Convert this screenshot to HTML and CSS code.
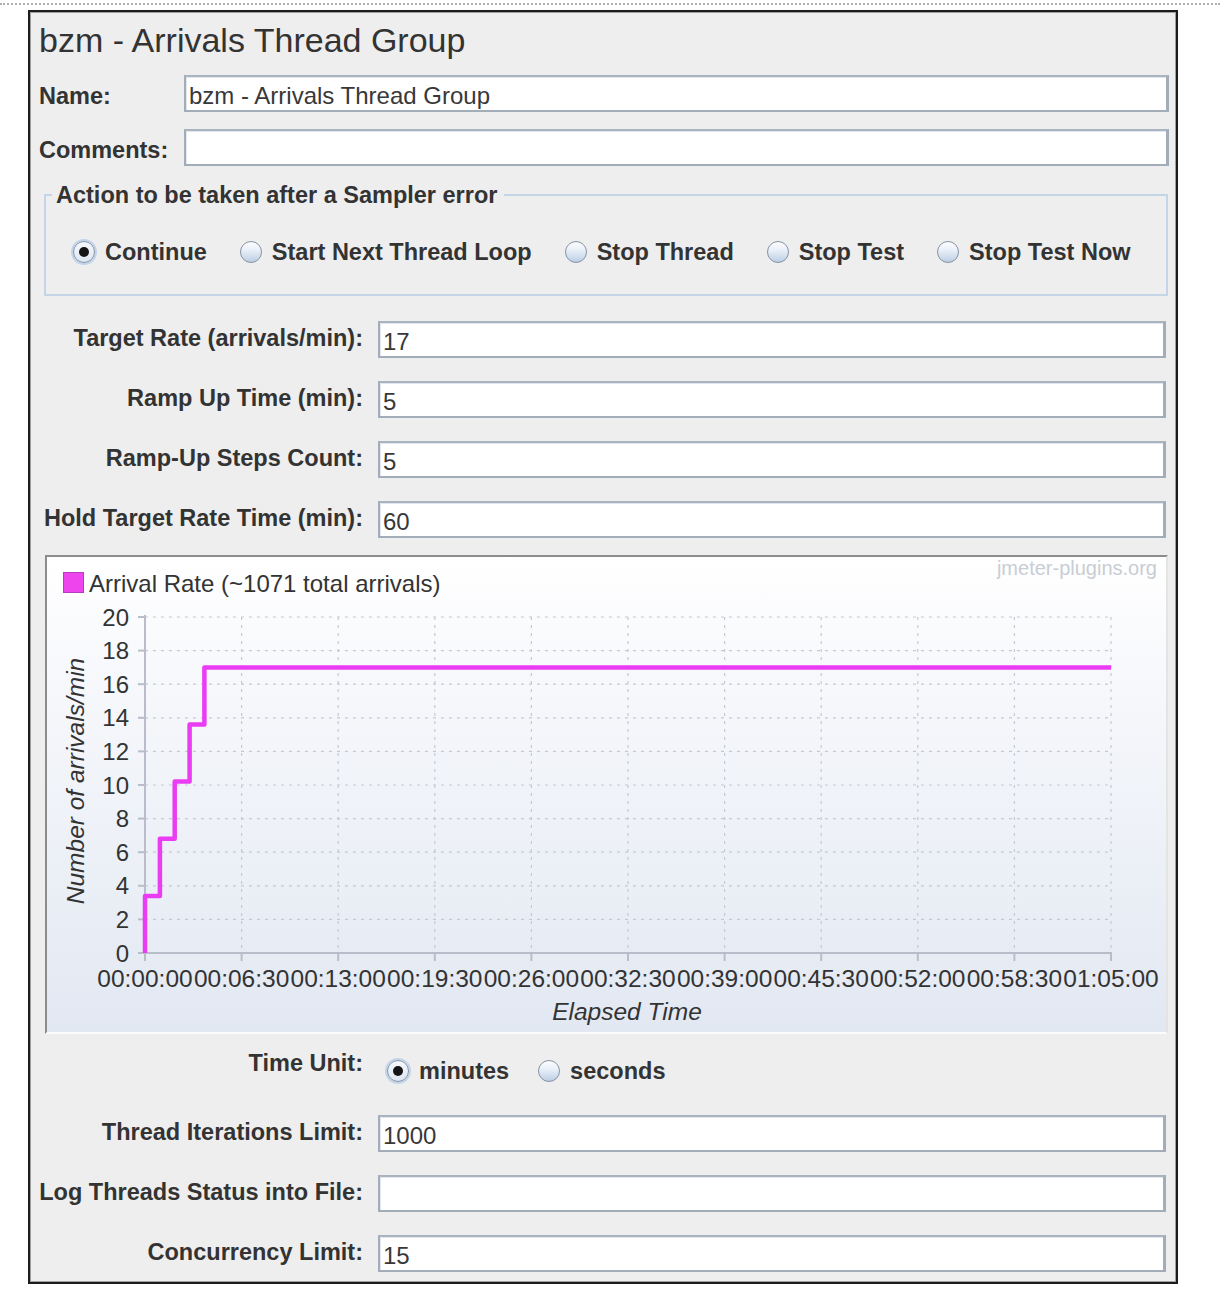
FILE: index.html
```html
<!DOCTYPE html>
<html>
<head>
<meta charset="utf-8">
<title>bzm - Arrivals Thread Group</title>
<link rel="stylesheet" href="styles.css">
</head>
<body>
<div class="dots"></div>
<div class="panel">
  <div class="title">bzm - Arrivals Thread Group</div>
  <div class="top-row"><label>Name:</label><input class="field" value="bzm - Arrivals Thread Group"></div>
  <div class="top-row"><label>Comments:</label><input class="field" value=""></div>

  <div class="group">
    <div class="group-title">Action to be taken after a Sampler error</div>
    <div class="radios">
      <span class="opt"><span class="radio on"></span>Continue</span>
      <span class="opt"><span class="radio"></span>Start Next Thread Loop</span>
      <span class="opt"><span class="radio"></span>Stop Thread</span>
      <span class="opt"><span class="radio"></span>Stop Test</span>
      <span class="opt"><span class="radio"></span>Stop Test Now</span>
    </div>
  </div>

  <div class="form">
    <div class="frow"><label>Target Rate (arrivals/min):</label><input class="field" value="17"></div>
    <div class="frow"><label>Ramp Up Time (min):</label><input class="field" value="5"></div>
    <div class="frow"><label>Ramp-Up Steps Count:</label><input class="field" value="5"></div>
    <div class="frow"><label>Hold Target Rate Time (min):</label><input class="field" value="60"></div>
  </div>

  <div class="chart">
    <svg viewBox="0 0 1119 475" xmlns="http://www.w3.org/2000/svg">
      <text class="watermark" x="1110" y="18" text-anchor="end">jmeter-plugins.org</text>
      <rect class="legend-box" x="16.5" y="15.5" width="20" height="20"/>
      <text class="legend-text" x="42" y="35">Arrival Rate (~1071 total arrivals)</text>

      <g class="grid">
        <line x1="98" y1="60" x2="1064" y2="60"/>
        <line x1="98" y1="93.6" x2="1064" y2="93.6"/>
        <line x1="98" y1="127.2" x2="1064" y2="127.2"/>
        <line x1="98" y1="160.8" x2="1064" y2="160.8"/>
        <line x1="98" y1="194.4" x2="1064" y2="194.4"/>
        <line x1="98" y1="228" x2="1064" y2="228"/>
        <line x1="98" y1="261.6" x2="1064" y2="261.6"/>
        <line x1="98" y1="295.2" x2="1064" y2="295.2"/>
        <line x1="98" y1="328.8" x2="1064" y2="328.8"/>
        <line x1="98" y1="362.4" x2="1064" y2="362.4"/>
        <line x1="194.6" y1="60" x2="194.6" y2="396"/>
        <line x1="291.2" y1="60" x2="291.2" y2="396"/>
        <line x1="387.8" y1="60" x2="387.8" y2="396"/>
        <line x1="484.4" y1="60" x2="484.4" y2="396"/>
        <line x1="581" y1="60" x2="581" y2="396"/>
        <line x1="677.6" y1="60" x2="677.6" y2="396"/>
        <line x1="774.2" y1="60" x2="774.2" y2="396"/>
        <line x1="870.8" y1="60" x2="870.8" y2="396"/>
        <line x1="967.4" y1="60" x2="967.4" y2="396"/>
        <line x1="1064" y1="60" x2="1064" y2="396"/>
      </g>

      <g class="axis">
        <line x1="98" y1="58" x2="98" y2="397"/>
        <line x1="97" y1="396" x2="1065" y2="396"/>
        <line x1="91" y1="60" x2="98" y2="60"/>
        <line x1="91" y1="93.6" x2="98" y2="93.6"/>
        <line x1="91" y1="127.2" x2="98" y2="127.2"/>
        <line x1="91" y1="160.8" x2="98" y2="160.8"/>
        <line x1="91" y1="194.4" x2="98" y2="194.4"/>
        <line x1="91" y1="228" x2="98" y2="228"/>
        <line x1="91" y1="261.6" x2="98" y2="261.6"/>
        <line x1="91" y1="295.2" x2="98" y2="295.2"/>
        <line x1="91" y1="328.8" x2="98" y2="328.8"/>
        <line x1="91" y1="362.4" x2="98" y2="362.4"/>
        <line x1="91" y1="396" x2="98" y2="396"/>
        <line x1="98" y1="396" x2="98" y2="404"/>
        <line x1="194.6" y1="396" x2="194.6" y2="404"/>
        <line x1="291.2" y1="396" x2="291.2" y2="404"/>
        <line x1="387.8" y1="396" x2="387.8" y2="404"/>
        <line x1="484.4" y1="396" x2="484.4" y2="404"/>
        <line x1="581" y1="396" x2="581" y2="404"/>
        <line x1="677.6" y1="396" x2="677.6" y2="404"/>
        <line x1="774.2" y1="396" x2="774.2" y2="404"/>
        <line x1="870.8" y1="396" x2="870.8" y2="404"/>
        <line x1="967.4" y1="396" x2="967.4" y2="404"/>
        <line x1="1064" y1="396" x2="1064" y2="404"/>
      </g>

      <g class="ylabels">
        <text x="82" y="68.5">20</text>
        <text x="82" y="102.1">18</text>
        <text x="82" y="135.7">16</text>
        <text x="82" y="169.3">14</text>
        <text x="82" y="202.9">12</text>
        <text x="82" y="236.5">10</text>
        <text x="82" y="270.1">8</text>
        <text x="82" y="303.7">6</text>
        <text x="82" y="337.3">4</text>
        <text x="82" y="370.9">2</text>
        <text x="82" y="404.5">0</text>
      </g>

      <g class="xlabels">
        <text x="98" y="430">00:00:00</text>
        <text x="194.6" y="430">00:06:30</text>
        <text x="291.2" y="430">00:13:00</text>
        <text x="387.8" y="430">00:19:30</text>
        <text x="484.4" y="430">00:26:00</text>
        <text x="581" y="430">00:32:30</text>
        <text x="677.6" y="430">00:39:00</text>
        <text x="774.2" y="430">00:45:30</text>
        <text x="870.8" y="430">00:52:00</text>
        <text x="967.4" y="430">00:58:30</text>
        <text x="1064" y="430">01:05:00</text>
      </g>

      <text class="axis-title" transform="translate(37 224) rotate(-90)" text-anchor="middle">Number of arrivals/min</text>
      <text class="axis-title" x="580" y="463" text-anchor="middle">Elapsed Time</text>

      <path class="rate" d="M98 396 V338.9 H112.9 V281.8 H127.7 V224.6 H142.6 V167.5 H157.4 V110.4 H1064"/>
    </svg>
  </div>

  <div class="form form2">
    <div class="frow unit">
      <label>Time Unit:</label>
      <div class="radios unit-radios">
        <span class="opt"><span class="radio on"></span>minutes</span>
        <span class="opt"><span class="radio"></span>seconds</span>
      </div>
    </div>
    <div class="frow"><label>Thread Iterations Limit:</label><input class="field" value="1000"></div>
    <div class="frow"><label>Log Threads Status into File:</label><input class="field" value=""></div>
    <div class="frow"><label>Concurrency Limit:</label><input class="field" value="15"></div>
  </div>
</div>
</body>
</html>
```

FILE: styles.css
```css
* { box-sizing: border-box; }

body {
  margin: 0;
  background: #ffffff;
  font-family: "Liberation Sans", Arial, sans-serif;
  color: #333333;
}

.dots {
  margin-top: 3px;
  border-top: 2px dotted #b0b0b0;
}

.panel {
  margin: 5px 0 0 28px;
  width: 1150px;
  border: 2px solid #1c1c1c;
  background: #eeeeee;
  padding: 10px 0 10px 0;
  box-shadow: inset 0 0 0 1px #a0a0a0;
}

.title {
  font-size: 34px;
  line-height: 37px;
  padding-left: 9px;
  color: #333333;
}

.top-row {
  display: flex;
  align-items: center;
  margin: 16px 7px 0 9px;
}
.top-row + .top-row { margin-top: 17px; }

.top-row label {
  width: 145px;
  flex: none;
  font-weight: bold;
  font-size: 23.5px;
  padding-top: 5px;
}

.field {
  flex: 1;
  min-width: 0;
  height: 37px;
  font: 24px "Liberation Sans", Arial, sans-serif;
  color: #383838;
  background: #ffffff;
  border: 2px solid #a3adba;
  border-top-color: #aab4c0;
  border-right-width: 3px;
  padding: 4px 0 0 3px;
  box-shadow: inset 1px 1px 0 #e2e7ee;
  outline: none;
}

.group {
  margin: 28px 8px 0 14px;
  border: 2px solid #c4d5e8;
  padding: 0 0 27px 27px;
}

.group-title {
  width: fit-content;
  margin: -15px 0 0 -21px;
  padding: 0 7px 0 4px;
  background: #eeeeee;
  font-weight: bold;
  font-size: 23.5px;
  line-height: 28px;
}

.radios {
  display: flex;
  align-items: center;
  gap: 33px;
  margin-top: 28px;
  height: 30px;
}

.opt {
  display: flex;
  align-items: center;
  gap: 10px;
  font-weight: bold;
  font-size: 23.5px;
  line-height: 30px;
  white-space: nowrap;
}

.radio {
  position: relative;
  flex: none;
  width: 22px;
  height: 22px;
  border-radius: 50%;
  border: 1px solid #8593a7;
  background: linear-gradient(#fdfdfe 0%, #e9f0f8 40%, #bccee4 100%);
}

.radio.on {
  background: linear-gradient(#f6f9fc, #dce6f1);
  box-shadow: 0 0 0 2px #c2d4ea;
}

.radio.on::after {
  content: "";
  position: absolute;
  left: 5px;
  top: 5px;
  width: 10px;
  height: 10px;
  border-radius: 50%;
  background: #151515;
}

.form {
  margin: 25px 10px 0 0;
  display: flex;
  flex-direction: column;
  gap: 23px;
}

.frow {
  display: grid;
  grid-template-columns: 333px 1fr;
  column-gap: 15px;
  align-items: center;
}

.frow label {
  text-align: right;
  font-weight: bold;
  font-size: 23.5px;
  white-space: nowrap;
  margin-top: -2px;
}

.frow .field { width: 100%; }

.chart {
  margin: 17px 8px 0 15px;
  height: 479px;
  border: 2px solid;
  border-color: #8c8c8c #e4e4e4 #fbfbfb #8c8c8c;
  background: linear-gradient(#ffffff 0%, #f8f9fc 22%, #e2e8f2 100%);
}

.chart svg {
  display: block;
  width: 100%;
  height: 475px;
  font-family: "Liberation Sans", Arial, sans-serif;
}

.watermark { font-size: 20px; fill: #c8cdd4; }
.legend-box { fill: #ee44ee; stroke: #b43cbc; stroke-width: 1; }
.legend-text { font-size: 24px; fill: #333333; }

.grid line {
  stroke: #c5c9d1;
  stroke-width: 1.2;
  stroke-dasharray: 3 5;
}

.axis line {
  stroke: #b8bdc9;
  stroke-width: 2;
}

.ylabels text { font-size: 24px; fill: #333333; text-anchor: end; }
.xlabels text { font-size: 24.5px; fill: #333333; text-anchor: middle; }
.axis-title { font-size: 24.5px; font-style: italic; fill: #333333; }

.rate {
  fill: none;
  stroke: #ea3cf2;
  stroke-width: 4.5;
  stroke-linejoin: round;
}

.form2 { margin-top: 14px; }

.frow.unit {
  align-items: start;
  min-height: 44px;
}

.frow.unit label { line-height: 30px; margin-top: 0; }

.unit-radios {
  margin-top: 0;
  padding-top: 8px;
  padding-left: 9px;
  height: auto;
  gap: 29px;
}
```
